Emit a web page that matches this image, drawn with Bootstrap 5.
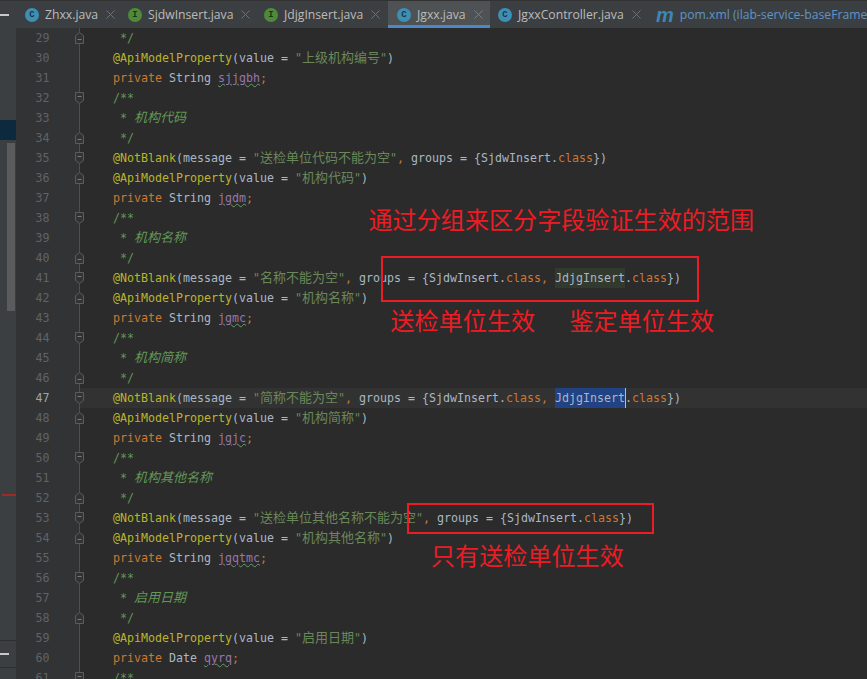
<!DOCTYPE html>
<html lang="zh">
<head>
<meta charset="utf-8">
<title>Jgxx.java</title>
<link href="https://cdn.jsdelivr.net/npm/bootstrap@5.3.0/dist/css/bootstrap.min.css" rel="stylesheet">
<style>
html,body{height:679px;overflow:hidden;background:#2b2b2b}
.ide{height:679px;position:relative;overflow:hidden}
.topbar{height:28px;background:#3c3f41;border-top:1px solid #323232;flex:none}
.side-head{width:16px;flex:none;display:flex;align-items:center}
.dash{display:block;width:9px;height:2px;background:#c8c8c8}
.ftab{height:27px;display:flex;align-items:center;flex:none;font:12.2px "Open Sans","Liberation Sans",sans-serif;color:#bbbbbb;white-space:nowrap}
.ftab.on{background:#4e5254;border-bottom:3px solid #4a88c7;padding-top:3px}
.ftab.pom{color:#5e94c6}
.w1{width:104px;padding-left:9px}
.w2{width:136px;padding-left:8px}
.w3{width:132px;padding-left:8px}
.w4{width:102px;padding-left:9px}
.w5{width:158px;padding-left:8px}
.w6{padding-left:8px}
.cir{width:14px;height:14px;border-radius:50%;flex:none;display:flex;align-items:center;justify-content:center;font:bold 9px "Liberation Mono",monospace;color:#23343e;margin-right:6px}
.cir.c{background:#3d8fb5}
.cir.i{background:#4f8a3a;color:#1f3217}
.mm{font:italic bold 20px "Liberation Sans",sans-serif;color:#3d86b8;margin-right:6px;line-height:1}
.xx{margin-left:8px;flex:none}
.sidebar{width:16px;flex:none;background:#3c3f41;height:651px}
.sel-row{height:20px;margin-top:92px;background:#0d293e}
.thumb{width:8px;height:168px;margin:3px 0 0 7px;background:#595b5d}
.errmark{height:2px;width:14px;margin:183px 0 0 2px;background:#9e2927}
.sep1{height:1px;background:#2f2f2f;margin-top:144px}
.dash2{margin-top:12px}
.sep2{height:1px;background:#2f2f2f;margin-top:12px}
.gutter{width:64px;flex:none;background:#313335;position:relative}
.foldline{position:absolute;left:63px;top:0;bottom:0;width:1px;background:#4d4f50}
.ln{height:20px;display:flex;font:11.63px/20px "DejaVu Sans Mono",monospace;color:#606366;position:relative}
.ln b{font-weight:400;width:27px;margin-left:13px;text-align:center;display:block}
.ln.cur b{color:#a4a3a3}
.ln svg{position:absolute;left:59px;top:3px}
.code{flex:1;min-width:0;background:#2b2b2b}
.cl{height:20px;padding-left:33px;font:11.63px/20px "DejaVu Sans Mono",monospace;color:#a9b7c6;white-space:pre}
.cl.cur{background:#323232}
.an{color:#bbb529}
.kw{color:#cc7832}
.st{color:#6a8759}
.cm{color:#629755}
.cmi{color:#629755;font-style:italic}
.fd{color:#9876aa;text-decoration:underline wavy #659c6b 1px}
.cj{font:13px/1 "Noto Sans CJK SC",sans-serif}
.cmi .cj{font-style:italic}
.hl{background:#32392f;display:inline-block}
.slc{background:#214283;display:inline-block;border-right:1px solid #bbbbbb;margin-right:-1px}
.rbox{position:absolute;border:2px solid #ed1c24}
.rtxt{position:absolute;color:#ed1c24;font:24.1px/30px "Noto Sans CJK SC",sans-serif;white-space:nowrap}
.b1{left:381px;top:256px;width:318px;height:46px}
.b2{left:407px;top:503px;width:247px;height:31px}
.t1{left:368.500px;top:204px}
.t2{left:390.500px;top:305px}
.t3{left:569.500px;top:305px}
.t4{left:431px;top:540px}
</style>
</head>
<body>
<div class="ide d-flex flex-column">
  <div class="topbar d-flex">
    <div class="side-head"><span class="dash"></span></div>
    <div class="ftab w1"><span class="cir c">C</span>Zhxx.java<svg class="xx" width="9" height="9" viewBox="0 0 9 9"><path d="M.5.5l8 8M8.500.5l-8 8" stroke="#6e7173"/></svg></div>
    <div class="ftab w2"><span class="cir i">I</span>SjdwInsert.java<svg class="xx" width="9" height="9" viewBox="0 0 9 9"><path d="M.5.5l8 8M8.500.5l-8 8" stroke="#6e7173"/></svg></div>
    <div class="ftab w3"><span class="cir i">I</span>JdjgInsert.java<svg class="xx" width="9" height="9" viewBox="0 0 9 9"><path d="M.5.5l8 8M8.500.5l-8 8" stroke="#6e7173"/></svg></div>
    <div class="ftab on w4"><span class="cir c">C</span>Jgxx.java<svg class="xx" width="9" height="9" viewBox="0 0 9 9"><path d="M.5.5l8 8M8.500.5l-8 8" stroke="#7b7e80"/></svg></div>
    <div class="ftab w5"><span class="cir c">C</span>JgxxController.java<svg class="xx" width="9" height="9" viewBox="0 0 9 9"><path d="M.5.5l8 8M8.500.5l-8 8" stroke="#6e7173"/></svg></div>
    <div class="ftab pom w6"><span class="mm">m</span>pom.xml (ilab-service-baseFrame</div>
  </div>
  <div class="d-flex flex-grow-1 overflow-hidden">
    <div class="sidebar">
      <div class="sel-row"></div>
      <div class="thumb"></div>
      <div class="errmark"></div>
      <div class="sep1"></div>
      <span class="dash dash2"></span>
      <div class="sep2"></div>
    </div>
    <div class="gutter" id="g"><div class="foldline"></div></div>
    <div class="code" id="c"></div>
  </div>
  <div class="rbox b1"></div>
  <div class="rbox b2"></div>
  <div class="rtxt t1">通过分组来区分字段验证生效的范围</div>
  <div class="rtxt t2">送检单位生效</div>
  <div class="rtxt t3">鉴定单位生效</div>
  <div class="rtxt t4">只有送检单位生效</div>
</div>
<script>
const A=s=>`<span class="an">${s}</span>`,K=s=>`<span class="kw">${s}</span>`,
S=s=>`<span class="st">"<span class="cj">${s}</span>"</span>`,
F=s=>`<span class="fd">${s}</span><span class="kw">;</span>`,
api=t=>`${A('@ApiModelProperty')}(value = ${S(t)})`,
nb=(t,g)=>`${A('@NotBlank')}(message = ${S(t)}${K(',')} groups = {${g}})`,
cls=n=>`${n}.${K('class')}`,
priv=(ty,n)=>`${K('private')} ${ty} ${F(n)}`,
open=`<span class="cm">/**</span>`,
star=t=>`<span class="cmi"> * <span class="cj">${t}</span></span>`,
close=`<span class="cm"> */</span>`;
const lines=[
[29,close,'e'],[30,api('上级机构编号')],[31,priv('String','sjjgbh')],[32,open,'s'],[33,star('机构代码')],[34,close,'e'],
[35,nb('送检单位代码不能为空',cls('SjdwInsert')),'s'],[36,api('机构代码'),'e'],[37,priv('String','jgdm')],[38,open,'s'],[39,star('机构名称')],[40,close,'e'],
[41,nb('名称不能为空',cls('SjdwInsert')+K(',')+' <span class="hl">JdjgInsert</span>.'+K('class')),'s'],[42,api('机构名称'),'e'],[43,priv('String','jgmc')],[44,open,'s'],[45,star('机构简称')],[46,close,'e'],
[47,nb('简称不能为空',cls('SjdwInsert')+K(',')+' <span class="slc">JdjgInsert</span>.'+K('class')),'s'],[48,api('机构简称'),'e'],[49,priv('String','jgjc')],[50,open,'s'],[51,star('机构其他名称')],[52,close,'e'],
[53,nb('送检单位其他名称不能为空',cls('SjdwInsert')),'s'],[54,api('机构其他名称'),'e'],[55,priv('String','jgqtmc')],[56,open,'s'],[57,star('启用日期')],[58,close,'e'],
[59,api('启用日期')],[60,priv('Date','qyrq')],[61,open,'s']];
const icon={
s:'<svg width="9" height="14" viewBox="0 0 9 14"><path d="M.5 1.500h8v8l-4 3-4-3z" fill="#313335" stroke="#5a5c5e"/><path d="M2.500 5.500h4" stroke="#77797b"/></svg>',
e:'<svg width="9" height="14" viewBox="0 0 9 14"><path d="M.5 12.500h8v-8l-4-3-4 3z" fill="#313335" stroke="#5a5c5e"/><path d="M2.500 8.500h4" stroke="#77797b"/></svg>'};
let gh='',ch='';
for(const [n,h,f] of lines){
 const cur=n===47?' cur':'';
 gh+=`<div class="ln${cur}"><b>${n}</b>${f?icon[f]:''}</div>`;
 ch+=`<div class="cl${cur}">${h}</div>`;
}
document.getElementById('g').insertAdjacentHTML('beforeend',gh);
document.getElementById('c').innerHTML=ch;
</script>
<script src="https://cdn.jsdelivr.net/npm/bootstrap@5.3.0/dist/js/bootstrap.bundle.min.js"></script>
</body>
</html>
